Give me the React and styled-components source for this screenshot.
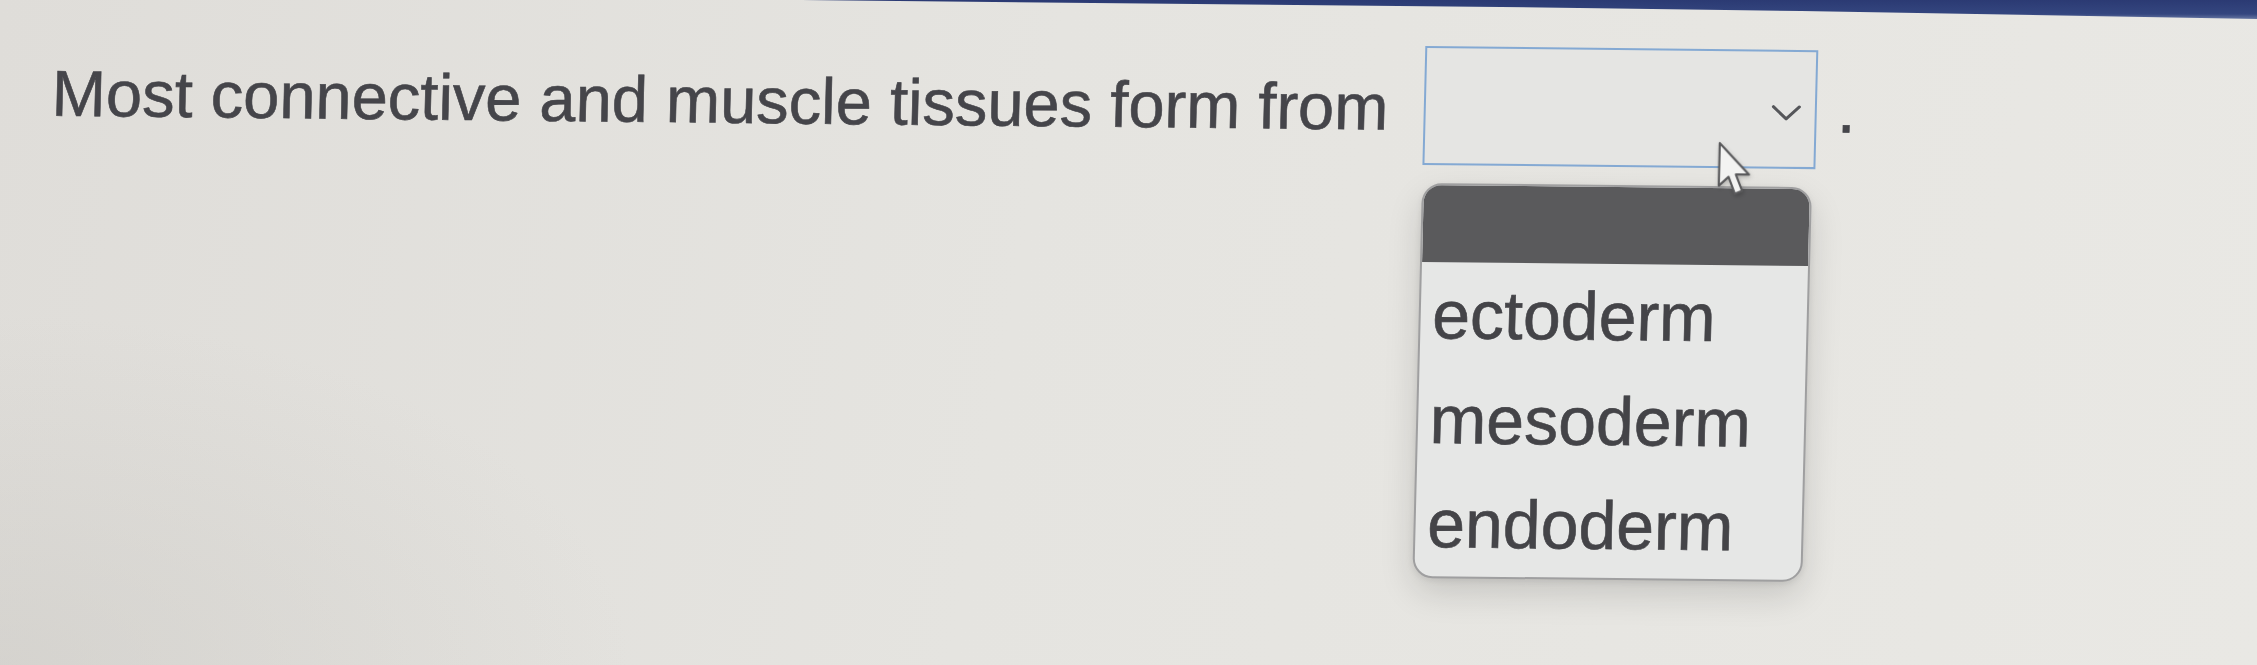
import React from "react";
import styled, { createGlobalStyle } from "styled-components";

const GlobalStyle = createGlobalStyle`
  html, body {
    margin: 0;
    padding: 0;
  }
  body {
    background: #e4e3df;
    font-family: "Liberation Sans", Arial, sans-serif;
  }
`;

const Page = styled.div`
  position: relative;
  width: 2257px;
  height: 665px;
  overflow: hidden;
  background:
    radial-gradient(ellipse 900px 500px at 0% 100%, rgba(200, 198, 193, 0.45), rgba(200, 198, 193, 0) 70%),
    linear-gradient(100deg, #dfddd9 0%, #e5e4e0 45%, #e9e8e4 100%);
`;

const TopEdge = styled.div`
  position: absolute;
  top: 0;
  left: 0;
  right: 0;
  height: 20px;
  background: linear-gradient(180deg, #2b3a73 0%, #34467f 70%, #6f7ea8 100%);
  clip-path: polygon(35.5% 0, 66.5% 35%, 79.8% 55%, 100% 95%, 100% 0);
`;

const Stage = styled.div`
  padding: 46px 0 0 52px;
  transform-origin: 1420px 100px;
  transform: rotate(0.6deg) skewX(-0.8deg);
`;

const QuestionRow = styled.div`
  display: flex;
  align-items: center;
`;

const Prompt = styled.span`
  font-size: 65px;
  color: #45454a;
  -webkit-text-stroke: 0.6px #45454a;
  white-space: nowrap;
  position: relative;
  top: 2px;
`;

const SelectWrap = styled.div`
  position: relative;
  margin-left: 35px;
`;

const SelectBox = styled.div`
  box-sizing: border-box;
  width: 393px;
  height: 119px;
  border: 2px solid #84a9d3;
  background: #e5e5e3;
  display: flex;
  justify-content: flex-end;
  align-items: center;
  padding: 6px 13px 0 0;
`;

const Period = styled.span`
  font-size: 65px;
  color: #45454a;
  -webkit-text-stroke: 0.8px #45454a;
  margin-left: 21px;
`;

const Menu = styled.div`
  position: absolute;
  top: 137px;
  left: 0;
  width: 390px;
  box-sizing: border-box;
  border: 2px solid #9f9fa0;
  border-radius: 20px;
  overflow: hidden;
  background: #e6e7e6;
  box-shadow: 0 14px 34px rgba(0, 0, 0, 0.14), 0 2px 6px rgba(0, 0, 0, 0.08);
  z-index: 2;
`;

const MenuHeader = styled.div`
  height: 77px;
  background: #5a5a5c;
`;

const Option = styled.div`
  height: 104.5px;
  line-height: 104.5px;
  padding: 0 12px;
  font-size: 68px;
  color: #444448;
  -webkit-text-stroke: 0.6px #444448;
  white-space: nowrap;
`;

const Cursor = styled.svg`
  position: absolute;
  left: 295px;
  top: 92px;
  width: 36px;
  height: 58px;
  z-index: 3;
  filter: drop-shadow(1px 2px 2px rgba(0, 0, 0, 0.2));
`;

const Chevron = () => (
  <svg width="31" height="18" viewBox="0 0 31 18" fill="none">
    <polyline
      points="2.5,3 15.5,15 28.5,3"
      stroke="#55565a"
      strokeWidth="3"
      strokeLinecap="round"
      strokeLinejoin="round"
    />
  </svg>
);

const options = ["ectoderm", "mesoderm", "endoderm"];

export default function App() {
  return (
    <>
      <GlobalStyle />
      <Page>
        <TopEdge />
        <Stage>
          <QuestionRow>
            <Prompt>Most connective and muscle tissues form from</Prompt>
            <SelectWrap>
              <SelectBox>
                <Chevron />
              </SelectBox>
              <Menu>
                <MenuHeader />
                {options.map((o) => (
                  <Option key={o}>{o}</Option>
                ))}
              </Menu>
              <Cursor viewBox="0 0 30 48">
                <path
                  d="M1.5 1.5 L1.5 37 L9.5 29.5 L15 43.5 L21 41 L15.5 27.5 L26.5 27.5 Z"
                  fill="#f3f3f2"
                  stroke="#5a5a5c"
                  strokeWidth="1.8"
                  strokeLinejoin="round"
                />
              </Cursor>
            </SelectWrap>
            <Period>.</Period>
          </QuestionRow>
        </Stage>
      </Page>
    </>
  );
}
